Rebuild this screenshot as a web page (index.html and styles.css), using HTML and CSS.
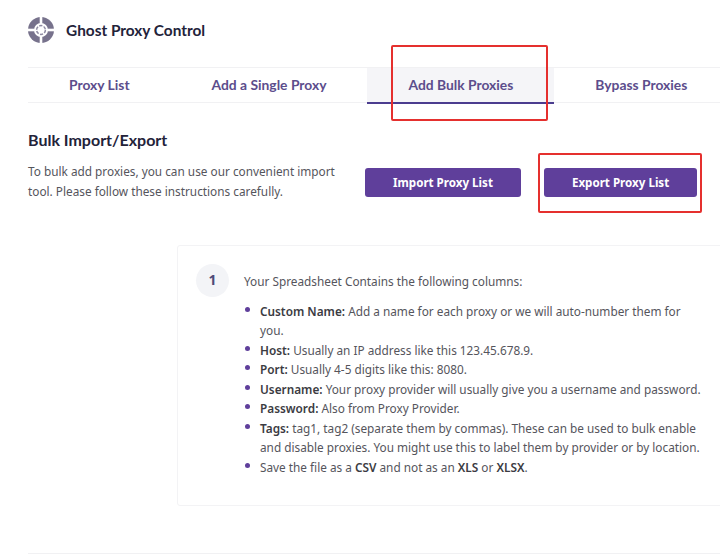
FILE: index.html
```html
<!DOCTYPE html>
<html lang="en">
<head>
  <meta charset="UTF-8">
  <title>Ghost Proxy Control</title>
  <link rel="stylesheet" href="styles.css">
</head>
<body>
  <div class="page">
    <div class="header">
      <svg class="logo" width="26" height="26" viewBox="0 0 26 26">
        <circle cx="13" cy="13" r="13" fill="#77728c"/>
        <circle cx="13" cy="13" r="7" fill="#fff"/>
        <circle cx="13" cy="13" r="4.4" fill="none" stroke="#8f8ba2" stroke-width="1.5" stroke-dasharray="3.2 1.4"/>
        <rect x="11.7" y="0" width="2.6" height="7" fill="#fff"/>
        <rect x="11.7" y="19" width="2.6" height="7" fill="#fff"/>
        <rect x="0" y="11.7" width="7" height="2.6" fill="#fff"/>
        <rect x="19" y="11.7" width="7" height="2.6" fill="#fff"/>
      </svg>
      <span class="app-title">Ghost Proxy Control</span>
    </div>

    <div class="tabs">
      <a class="tab">Proxy List</a>
      <a class="tab">Add a Single Proxy</a>
      <a class="tab active">Add Bulk Proxies</a>
      <a class="tab">Bypass Proxies</a>
    </div>

    <h2>Bulk Import/Export</h2>
    <div class="intro">
      <p>To bulk add proxies, you can use our convenient import tool. Please follow these instructions carefully.</p>
      <div class="buttons">
        <button class="btn">Import Proxy List</button>
        <button class="btn">Export Proxy List</button>
      </div>
    </div>

    <div class="card">
      <div class="step">1</div>
      <div class="step-body">
        <p>Your Spreadsheet Contains the following columns:</p>
        <ul>
          <li><b>Custom Name:</b> Add a name for each proxy or we will auto-number them for you.</li>
          <li><b>Host:</b> Usually an IP address like this 123.45.678.9.</li>
          <li><b>Port:</b> Usually 4-5 digits like this: 8080.</li>
          <li><b>Username:</b> Your proxy provider will usually give you a username and password.</li>
          <li><b>Password:</b> Also from Proxy Provider.</li>
          <li><b>Tags:</b> tag1, tag2 (separate them by commas). These can be used to bulk enable and disable proxies. You might use this to label them by provider or by location.</li>
          <li>Save the file as a <b>CSV</b> and not as an <b>XLS</b> or <b>XLSX</b>.</li>
        </ul>
      </div>
    </div>

    <div class="footer-line"></div>
  </div>

  <div class="mark mark-tab"></div>
  <div class="mark mark-export"></div>
</body>
</html>
```

FILE: styles.css
```css
html, body { margin: 0; height: 558px; overflow: hidden; background: #fff; }
body { position: relative; width: 720px; font-family: "Noto Sans", sans-serif; color: #55555c; }
.page { width: 760px; padding: 17px 0 0 28px; box-sizing: border-box; }

.header { display: flex; align-items: center; gap: 12px; height: 26px; }
.logo { display: block; flex: none; }
.app-title { font-family: Lato, sans-serif; font-weight: 700; font-size: 15.4px; color: #23233a; }

.tabs { display: flex; margin-top: 24px; height: 36px; border-top: 1px solid #f1f1f3; border-bottom: 1px solid #f1f1f3; box-sizing: border-box; }
.tab { padding: 0 41px; line-height: 33px; font-family: Lato, sans-serif; font-weight: 700; font-size: 13.85px; color: #5c4d8c; white-space: nowrap; }
.tab.active { background: #f5f5f8; border-bottom: 2px solid #4b3d8f; height: 36px; box-sizing: border-box; }

h2 { margin: 27px 0 0; font-family: Lato, sans-serif; font-weight: 700; font-size: 16px; line-height: 20px; color: #23233a; }

.intro { display: flex; margin-top: 12px; width: 692px; }
.intro p { margin: 0; width: 320px; font-size: 11.8px; line-height: 19.5px; }
.buttons { display: flex; gap: 23px; margin: 6px 0 0 17px; }
.btn { height: 29px; padding: 0 28px; border: none; border-radius: 3px; background: #5f3f9b; color: #fff; font-family: "Noto Sans", sans-serif; font-weight: 700; font-size: 11.6px; }

.card { display: flex; margin: 44px 0 0 149px; width: 560px; height: 261px; padding: 18px 28px 0 18px; box-sizing: border-box; border: 1px solid #f3f3f5; border-radius: 3px; }
.step { flex: none; width: 33px; height: 33px; border-radius: 50%; background: #f3f4f7; text-align: center; line-height: 31px; font-weight: 700; font-size: 14px; color: #4f4a78; }
.step-body { flex: none; width: 460px; margin-left: 15px; font-size: 11.8px; line-height: 19.5px; }
.step-body p { margin: 8px 0 0; }
.step-body ul { margin: 10px 0 0; padding: 0 0 0 16px; list-style: none; }
.step-body li { position: relative; }
.step-body li::before { content: ""; position: absolute; left: -15px; top: 5px; width: 5px; height: 5px; border-radius: 50%; background: #5f3f9b; }
.step-body b { font-weight: 600; color: #3b3b42; }

.footer-line { margin-top: 47px; border-top: 1px solid #f1f1f3; }

.mark { position: absolute; box-sizing: border-box; border: 2px solid #e5302e; border-radius: 2px; }
.mark-tab { left: 391px; top: 45px; width: 157px; height: 76px; }
.mark-export { left: 538px; top: 153px; width: 164px; height: 60px; }
```
